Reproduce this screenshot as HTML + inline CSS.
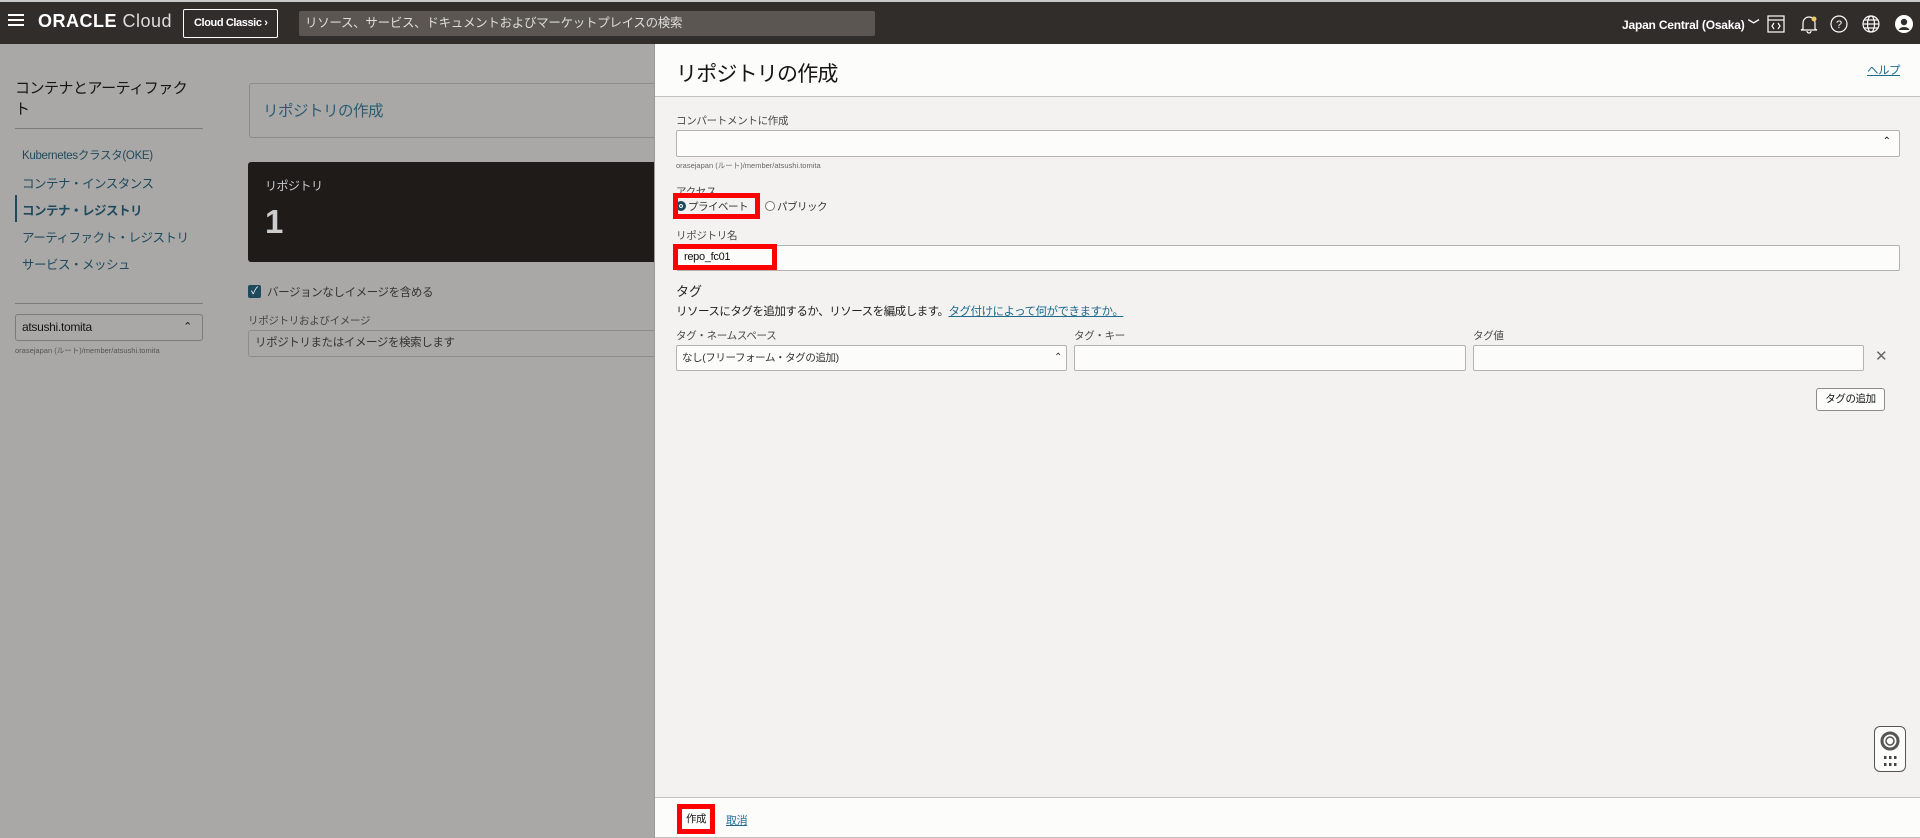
<!DOCTYPE html>
<html><head><meta charset="utf-8"><style>
*{box-sizing:border-box;margin:0;padding:0}
body{width:1920px;height:838px;overflow:hidden;position:relative;background:#a9a8a6;font-family:"Liberation Sans","Noto Sans CJK JP",sans-serif;color:#161513}
.a{position:absolute;white-space:nowrap}
.top{position:absolute;left:0;top:0;width:1920px;height:44px;background:#312d2a;border-top:2px solid #c9c9c9}
.panel{position:absolute;left:654px;top:44px;width:1266px;height:794px;background:#f3f2f1;border-left:1px solid #999}
.inp{position:absolute;background:#fcfcfb;border:1px solid #b5b3b0;border-radius:2px}
.lbl{font-size:10.5px;color:#4a4845;letter-spacing:-0.3px}
.red{position:absolute;border:5px solid #f00}
</style></head><body>
<div class="top">
 <div class="a" style="left:8px;top:12px;width:16px;height:2px;background:#fff;box-shadow:0 5px 0 #fff,0 10px 0 #fff"></div>
 <div class="a" style="left:38px;top:9px;font-size:18px;color:#fff;letter-spacing:0.5px"><b style="font-weight:bold">ORACLE</b> <span style="color:#ddd">Cloud</span></div>
 <div class="a" style="left:183px;top:7px;width:95px;height:29px;border:1px solid #fff;border-radius:2px;color:#fff;font-size:11px;font-weight:bold;line-height:27px;padding-left:10px;letter-spacing:-0.4px">Cloud Classic ›</div>
 <div class="a" style="left:299px;top:9px;width:576px;height:25px;background:#5b5651;border-radius:2px;color:#ddd;font-size:12.5px;line-height:25px;padding-left:6px;letter-spacing:-0.3px">リソース、サービス、ドキュメントおよびマーケットプレイスの検索</div>
 <div class="a" style="left:1622px;top:14px;color:#fff;font-size:12px;font-weight:bold;letter-spacing:-0.2px">Japan Central (Osaka) ﹀</div>
 <svg class="a" style="left:1767px;top:13px" width="18" height="18" viewBox="0 0 18 18" fill="none" stroke="#fff" stroke-width="1.2"><rect x="1" y="1" width="16" height="16"/><line x1="1" y1="5" x2="17" y2="5"/><path d="M7 8l-2 3 2 3M11 8l2 3-2 3"/></svg>
 <svg class="a" style="left:1800px;top:12px" width="18" height="20" viewBox="0 0 18 20" fill="none" stroke="#fff" stroke-width="1.2"><path d="M3 15V9a6 6 0 0112 0v6l2 1H1z"/><path d="M7 17a2 2 0 004 0"/><circle cx="14" cy="5" r="2.5" fill="#f2c860" stroke="none"/></svg>
 <svg class="a" style="left:1830px;top:13px" width="18" height="18" viewBox="0 0 18 18" fill="none" stroke="#fff" stroke-width="1.2"><circle cx="9" cy="9" r="8"/><text x="9" y="13" font-size="11" fill="#fff" stroke="none" text-anchor="middle" font-family="Liberation Sans">?</text></svg>
 <svg class="a" style="left:1862px;top:13px" width="18" height="18" viewBox="0 0 18 18" fill="none" stroke="#fff" stroke-width="1.2"><circle cx="9" cy="9" r="8"/><ellipse cx="9" cy="9" rx="3.5" ry="8"/><line x1="1" y1="9" x2="17" y2="9"/><line x1="2" y1="5" x2="16" y2="5"/><line x1="2" y1="13" x2="16" y2="13"/></svg>
 <svg class="a" style="left:1895px;top:13px" width="18" height="18" viewBox="0 0 18 18"><circle cx="9" cy="9" r="9" fill="#fff"/><circle cx="9" cy="7" r="3.2" fill="#312d2a"/><path d="M3.5 15a6 5 0 0111 0" fill="#312d2a"/></svg>
</div>

<div class="a" style="left:15px;top:78px;font-size:15px;color:#161513;line-height:21px;letter-spacing:-0.5px">コンテナとアーティファク<br>ト</div>
<div class="a" style="left:15px;top:128px;width:188px;height:1px;background:#7d7b78"></div>
<div class="a" style="left:22px;top:147px;font-size:11.5px;color:#1f4a5e;letter-spacing:-0.3px">Kubernetesクラスタ(OKE)</div>
<div class="a" style="left:22px;top:173px;font-size:12.5px;color:#1f4a5e;letter-spacing:-0.5px">コンテナ・インスタンス</div>
<div class="a" style="left:15px;top:195px;width:2px;height:27px;background:#1f4a5e"></div>
<div class="a" style="left:22px;top:200px;font-size:12.5px;color:#1f4a5e;font-weight:bold;letter-spacing:-0.5px">コンテナ・レジストリ</div>
<div class="a" style="left:22px;top:227px;font-size:12.5px;color:#1f4a5e;letter-spacing:-0.5px">アーティファクト・レジストリ</div>
<div class="a" style="left:22px;top:254px;font-size:12.5px;color:#1f4a5e;letter-spacing:-0.5px">サービス・メッシュ</div>
<div class="a" style="left:15px;top:303px;width:188px;height:1px;background:#7d7b78"></div>
<div class="a" style="left:15px;top:314px;width:188px;height:27px;border:1px solid #7d7b78;border-radius:3px;font-size:12px;line-height:25px;padding-left:6px;letter-spacing:-0.3px">atsushi.tomita<span style="position:absolute;right:10px;font-size:11px">⌃</span></div>
<div class="a" style="left:15px;top:345px;font-size:7.5px;color:#555">orasejapan (ルート)/member/atsushi.tomita</div>

<div class="a" style="left:249px;top:83px;width:420px;height:55px;border:1px solid #8e8c89;border-radius:3px"></div>
<div class="a" style="left:263px;top:99px;font-size:15.5px;color:#2d5c72;letter-spacing:-0.5px">リポジトリの作成</div>
<div class="a" style="left:248px;top:162px;width:420px;height:100px;background:#1e1b19;border-radius:3px"></div>
<div class="a" style="left:265px;top:177px;font-size:12px;color:#ccc;letter-spacing:-0.5px">リポジトリ</div>
<div class="a" style="left:265px;top:203px;font-size:33px;color:#ccc;font-weight:bold">1</div>
<div class="a" style="left:248px;top:285px;width:13px;height:13px;background:#1f4a5e;border-radius:2px;color:#fff;font-size:10px;line-height:13px;text-align:center">✓</div>
<div class="a" style="left:267px;top:284px;font-size:11.5px;color:#333;letter-spacing:-0.4px">バージョンなしイメージを含める</div>
<div class="a" style="left:248px;top:313px;font-size:10.5px;color:#444;letter-spacing:-0.3px">リポジトリおよびイメージ</div>
<div class="a" style="left:248px;top:330px;width:420px;height:27px;border:1px solid #8e8c89;border-radius:3px;font-size:11.5px;color:#333;line-height:25px;padding-left:6px;letter-spacing:-0.4px">リポジトリまたはイメージを検索します</div>

<div class="panel">
 <div class="a" style="left:0;top:0;width:1266px;height:53px;background:#fcfcfb;border-bottom:1px solid #c4c2bf"></div>
 <div class="a" style="left:21px;top:14px;font-size:21px;color:#161513;letter-spacing:-0.8px">リポジトリの作成</div>
 <div class="a" style="left:1212px;top:18px;font-size:11.5px;color:#1f6b8e;text-decoration:underline;letter-spacing:-0.5px">ヘルプ</div>
 <div class="a lbl" style="left:21px;top:69px">コンパートメントに作成</div>
 <div class="inp" style="left:21px;top:86px;width:1224px;height:27px"><span style="position:absolute;right:8px;top:5px;font-size:10px">⌃</span></div>
 <div class="a" style="left:21px;top:116px;font-size:7.5px;color:#666">orasejapan (ルート)/member/atsushi.tomita</div>
 <div class="a lbl" style="left:21px;top:140px">アクセス</div>
 <div class="a" style="left:21px;top:157px;width:10px;height:10px;border-radius:50%;background:#1f4a5e;border:3px solid #1f4a5e;box-shadow:inset 0 0 0 1px #fff"></div>
 <div class="a" style="left:33px;top:155px;font-size:10.5px;color:#333;letter-spacing:-0.5px">プライベート</div>
 <div class="a" style="left:110px;top:157px;width:10px;height:10px;border-radius:50%;border:1px solid #777;background:#fff"></div>
 <div class="a" style="left:122px;top:155px;font-size:10.5px;color:#333;letter-spacing:-0.5px">パブリック</div>
 <div class="red" style="left:18px;top:149px;width:87px;height:26px"></div>
 <div class="a lbl" style="left:21px;top:184px">リポジトリ名</div>
 <div class="inp" style="left:21px;top:201px;width:1224px;height:26px"></div>
 <div class="red" style="left:18px;top:200px;width:104px;height:26px"></div>
 <div class="a" style="left:29px;top:207px;font-size:11px;color:#111;letter-spacing:-0.3px">repo_fc01</div>
 <div class="a" style="left:21px;top:237px;font-size:13px;color:#222">タグ</div>
 <div class="a" style="left:21px;top:259px;font-size:11.5px;color:#222;letter-spacing:-0.5px">リソースにタグを追加するか、リソースを編成します。<span style="color:#1f6b8e;text-decoration:underline">タグ付けによって何ができますか。</span></div>
 <div class="a lbl" style="left:21px;top:284px">タグ・ネームスペース</div>
 <div class="a lbl" style="left:419px;top:284px">タグ・キー</div>
 <div class="a lbl" style="left:818px;top:284px">タグ値</div>
 <div class="inp" style="left:21px;top:301px;width:391px;height:26px;font-size:10.5px;line-height:24px;padding-left:5px;color:#333;letter-spacing:-0.4px">なし(フリーフォーム・タグの追加)<span style="position:absolute;right:4px;top:0;font-size:10px">⌃</span></div>
 <div class="inp" style="left:419px;top:301px;width:392px;height:26px"></div>
 <div class="inp" style="left:818px;top:301px;width:391px;height:26px"></div>
 <div class="a" style="left:1220px;top:303px;font-size:15px;color:#666">✕</div>
 <div class="a" style="left:1161px;top:344px;width:69px;height:23px;border:1px solid #8e8c89;border-radius:3px;background:#fcfcfb;font-size:10.5px;line-height:21px;text-align:center;letter-spacing:-0.4px">タグの追加</div>
 <div class="a" style="left:1219px;top:682px;width:32px;height:46px;border:1.5px solid #555;border-radius:6px;background:#fcfcfb">
  <svg class="a" style="left:5px;top:4px" width="20" height="20" viewBox="0 0 20 20" fill="none" stroke="#555"><circle cx="10" cy="10" r="8" stroke-width="3"/><circle cx="10" cy="10" r="4" stroke-width="1.5" fill="#fff"/></svg>
  <svg class="a" style="left:9px;top:29px" width="13" height="11" viewBox="0 0 13 11" fill="#444"><rect x="0" y="0" width="2.5" height="3"/><rect x="5" y="0" width="2.5" height="3"/><rect x="10" y="0" width="2.5" height="3"/><rect x="0" y="7" width="2.5" height="3"/><rect x="5" y="7" width="2.5" height="3"/><rect x="10" y="7" width="2.5" height="3"/></svg>
 </div>
 <div class="a" style="left:0;top:753px;width:1266px;height:41px;background:#fcfcfb;border-top:1px solid #c4c2bf;border-bottom:1px solid #c4c2bf"></div>
 <div class="a" style="left:22px;top:760px;width:38px;height:30px;background:#f00"></div>
 <div class="a" style="left:27px;top:765px;width:28px;height:20px;background:#fff;font-size:10.5px;line-height:20px;text-align:center;letter-spacing:-0.5px">作成</div>
 <div class="a" style="left:71px;top:768px;font-size:11px;color:#1f6b8e;text-decoration:underline;letter-spacing:-0.4px">取消</div>
</div>
</body></html>
